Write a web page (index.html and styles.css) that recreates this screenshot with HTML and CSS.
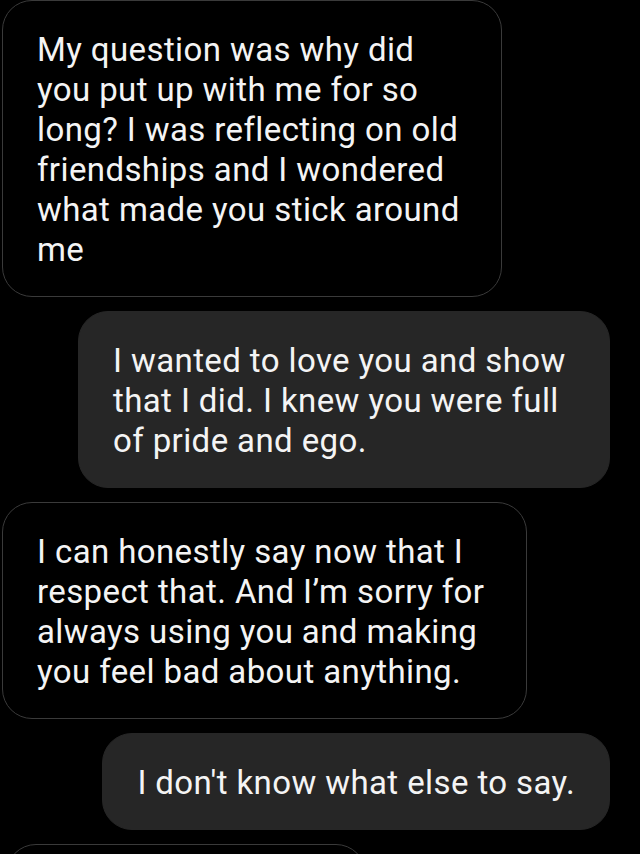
FILE: index.html
```html
<!DOCTYPE html>
<html lang="en">
<head>
    <meta charset="UTF-8">
    <meta name="viewport" content="width=device-width, initial-scale=1.0">
    <title>Messages</title>
    <link rel="stylesheet" href="styles.css">
</head>
<body>

<div class="thread">
    <div class="bubble received msg-a">
        My question was why did you put up with me for so long? I was reflecting on old friendships and I wondered what made you stick around me
    </div>
    <div class="bubble sent msg-b">
        I wanted to love you and show that I did. I knew you were full of pride and ego.
    </div>
    <div class="bubble received msg-c">
        I can honestly say now that I respect that. And I’m sorry for always using you and making you feel bad about anything.
    </div>
    <div class="bubble sent">
        I don't know what else to say.
    </div>
    <div class="bubble received msg-d">
        &nbsp;
    </div>
</div>

</body>
</html>
```

FILE: styles.css
```css
body {
    margin: 0;
    padding: 0;
    background: #000;
    color: #f4f4f4;
    font-family: 'Roboto', 'Noto Sans', sans-serif;
    height: 854px;
    overflow: hidden;
}
.thread {
    display: flex;
    flex-direction: column;
    gap: 14px;
    padding: 0 30px 0 2px;
}
.bubble {
    box-sizing: border-box;
    font-size: 33px;
    letter-spacing: 0.4px;
    line-height: 40px;
    padding: 29px 34px 26px 34px;
    border-radius: 30px;
}
.received {
    align-self: flex-start;
    border: 1.5px solid #3a3a3a;
    background: #000;
    padding-right: 28px;
}
.sent {
    align-self: flex-end;
    background: #262626;
    border: 1.5px solid #262626;
}
.msg-a {
    width: 500px;
}
.msg-b {
    width: 532px;
}
.msg-c {
    width: 525px;
}
.msg-d {
    width: 360px;
    margin-left: 4px;
}
```
